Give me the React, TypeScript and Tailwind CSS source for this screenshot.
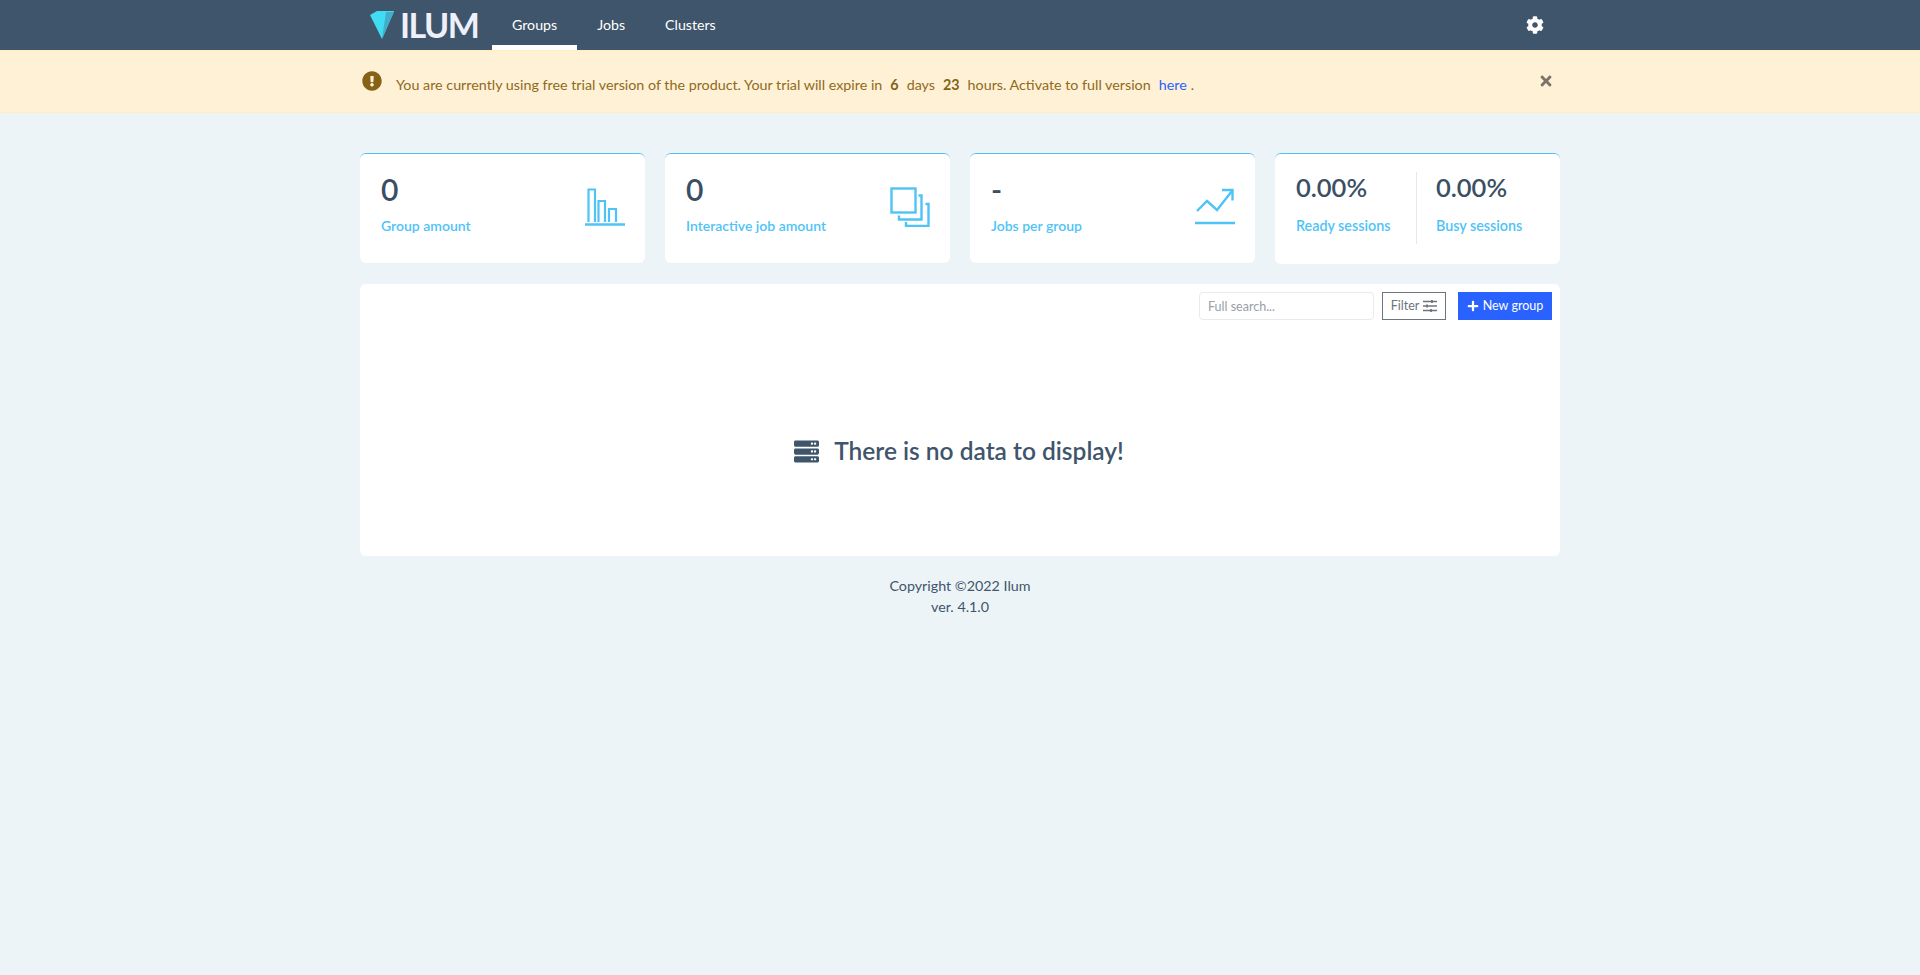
import { FaCog, FaExclamationCircle, FaPlus, FaServer, FaTimes } from "react-icons/fa";

const font = "font-['Lato','Noto_Sans',sans-serif]";

function BarsIcon() {
  return (
    <svg className="h-10 w-10 text-[#4fc3f7]" viewBox="0 0 40 40" fill="none" stroke="currentColor" strokeWidth="2.2">
      <path d="M3.5 35V2.5h6.5V35M13.5 35V14h6.5v21M24 35V22h7v13" />
      <path d="M0 37.5h40" strokeWidth="2.4" />
    </svg>
  );
}

function CopyIcon() {
  return (
    <svg className="h-10 w-10 text-[#4fc3f7]" viewBox="0 0 40 40" fill="none" stroke="currentColor" strokeWidth="2.4">
      <rect x="1.5" y="1.5" width="24" height="24" />
      <path d="M28.5 8.5h3v24H9v-4" />
      <path d="M35.5 17h3v22H16v-4" />
    </svg>
  );
}

function TrendIcon() {
  return (
    <svg className="h-10 w-10 text-[#4fc3f7]" viewBox="0 0 40 40" fill="none" stroke="currentColor" strokeWidth="2.4">
      <path d="M2 24l10-10 10 9L37 4" />
      <path d="M27 3h10.5v10.5" />
      <path d="M0 36h40" />
    </svg>
  );
}

function SlidersIcon() {
  return (
    <svg className="h-3.5 w-3.5" viewBox="0 0 14 14" fill="none" stroke="currentColor" strokeWidth="1.4">
      <path d="M0 2.5h14M0 7h14M0 11.5h14" />
      <path d="M9 1v3M4 5.5v3M8 10v3" strokeWidth="1.8" />
    </svg>
  );
}

function StatCard({ value, label, icon }: { value: string; label: string; icon: React.ReactNode }) {
  return (
    <div className="flex h-[110px] w-[285px] items-start justify-between rounded-md border-t border-[#54bfe8] bg-white pr-5 pl-[21px] pt-[16px]">
      <div>
        <p className="h-[38px] text-[30px] leading-[38px] font-semibold text-[#3a4f64]">{value}</p>
        <p className="mt-[8px] text-sm leading-5 font-semibold text-[#4fc3f7]">{label}</p>
      </div>
      <div className="mt-[17px]">{icon}</div>
    </div>
  );
}

export default function App() {
  return (
    <div className={`${font} min-h-[975px] bg-[#ecf4f8] text-[#3f556b]`}>
      <nav className="h-[50px] bg-[#3f556b]">
        <div className="mx-auto flex h-full w-[1200px] items-stretch">
          <div className="flex w-[132px] items-center pl-[10px]">
            <svg className="h-[28px] w-[24px]" viewBox="0 0 24 28">
              <path d="M0 4L7 0h17L12 28z" fill="#3fdcf2" />
              <path d="M16 1h8l-12 27z" fill="#43aecb" />
            </svg>
            <span className="ml-[6px] text-[34px] leading-none font-bold tracking-[-1.5px] text-[#eef0fb]">ILUM</span>
          </div>
          <a className="flex items-center border-b-[5px] border-white px-5 pt-[5px] text-[14.2px] text-white">Groups</a>
          <a className="flex items-center px-5 text-[14.2px] text-white">Jobs</a>
          <a className="flex items-center px-5 text-[14.2px] text-white">Clusters</a>
          <div className="ml-auto flex items-center pr-[16px]">
            <FaCog className="h-[18px] w-[18px] text-white" />
          </div>
        </div>
      </nav>

      <div className="h-[63px] border-y border-[#ffeeba] bg-[#fff1d6]">
        <div className="mx-auto flex h-full w-[1200px] items-start text-[14.3px] text-[#8f6a1c]">
          <FaExclamationCircle className="mt-[20px] ml-[2px] h-5 w-5 shrink-0 text-[#856214]" />
          <p className="mt-[24px] ml-[14px] leading-5">
            You are currently using free trial version of the product. Your trial will expire in
            <b className="mx-2 font-bold text-[#856214]">6</b>
            days
            <b className="mx-2 font-bold text-[#856214]">23</b>
            hours. Activate to full version
            <a className="mr-1 ml-2 text-[#2962ff]">here</a>.
          </p>
          <FaTimes className="mt-[22px] mr-[7px] ml-auto h-4 w-[14px] text-[#7a7468]" />
        </div>
      </div>

      <main className="mx-auto w-[1200px] pt-10">
        <div className="flex items-start justify-between">
          <StatCard value="0" label="Group amount" icon={<BarsIcon />} />
          <StatCard value="0" label="Interactive job amount" icon={<CopyIcon />} />
          <StatCard value="-" label="Jobs per group" icon={<TrendIcon />} />
          <div className="flex h-[111px] w-[285px] rounded-md border-t border-[#54bfe8] bg-white py-[18px] pr-5 pl-[21px]">
            <div className="h-[72px] w-[121px] border-r border-[#e5e9ec]">
              <p className="-mt-px text-[25.5px] leading-8 font-semibold text-[#3a4f64]">0.00%</p>
              <p className="mt-[13px] text-[14.3px] leading-5 font-semibold text-[#4fc3f7]">Ready sessions</p>
            </div>
            <div className="pl-[19px]">
              <p className="-mt-px text-[25.5px] leading-8 font-semibold text-[#3a4f64]">0.00%</p>
              <p className="mt-[13px] text-[14.3px] leading-5 font-semibold text-[#4fc3f7]">Busy sessions</p>
            </div>
          </div>
        </div>

        <section className="mt-[20px] h-[272px] rounded-md bg-white pt-2 pr-2">
          <div className="flex justify-end">
            <input
              className="h-7 w-[175px] rounded border border-[#e8eaec] px-2 text-[12.5px] outline-none placeholder:text-[#9aa0a6]"
              placeholder="Full search..."
            />
            <button className="ml-2 flex h-7 w-16 items-center justify-center gap-1 border border-[#6c757d] text-[12.5px] text-[#6c757d]">
              Filter <SlidersIcon />
            </button>
            <button className="ml-3 flex h-7 w-[94px] items-center justify-center gap-1 bg-[#2962ff] text-[12.5px] text-white">
              <FaPlus className="h-3 w-3" /> New group
            </button>
          </div>
          <div className="mt-[115px] flex items-center justify-center gap-[15px] pl-[6px]">
            <FaServer className="h-[25px] w-[25px] text-[#3f556b]" />
            <h2 className="text-[24.5px] leading-8 font-semibold text-[#3f556b]">There is no data to display!</h2>
          </div>
        </section>

        <footer className="mt-[19px] text-center text-[14.3px] leading-[21px] text-[#3f556b]">
          <p>Copyright ©2022 Ilum</p>
          <p>ver. 4.1.0</p>
        </footer>
      </main>
    </div>
  );
}
